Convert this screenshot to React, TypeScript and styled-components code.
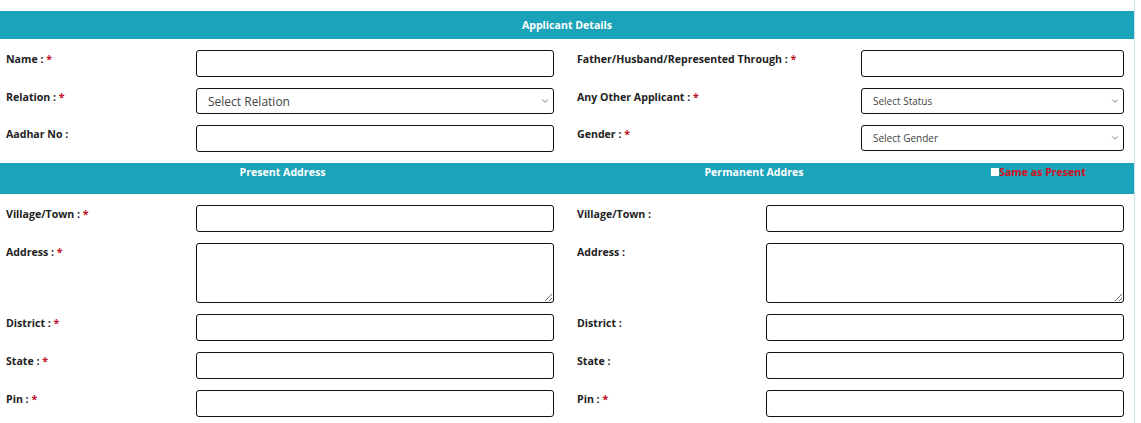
import styled, { createGlobalStyle } from 'styled-components';
import { ChevronDown } from 'lucide-react';

const GlobalStyle = createGlobalStyle`
    html, body {
        margin: 0;
        padding: 0;
        background: #fff;
    }
    body {
        font-family: 'Open Sans', 'Noto Sans', sans-serif;
        color: #222;
    }
`;

interface FieldProps {
    label: string;
    required?: boolean;
    children: React.ReactNode;
}

const Field: React.FC<FieldProps & { side: 'left' | 'right' }> = ({ label, required, side, children }) => (
    <>
        <StyledLabel $side={side}>
            {label} :{required && <StyledStar> *</StyledStar>}
        </StyledLabel>
        <StyledCell>{children}</StyledCell>
    </>
);

const SelectBox: React.FC<{ placeholder: string; small?: boolean }> = ({ placeholder, small }) => (
    <StyledSelectWrap>
        <StyledSelect $small={small} defaultValue="">
            <option value="">{placeholder}</option>
        </StyledSelect>
        <StyledChevron>
            <ChevronDown size={10} strokeWidth={2} />
        </StyledChevron>
    </StyledSelectWrap>
);

const App: React.FC = () => {
    return (
        <StyledPage>
            <GlobalStyle />
            <StyledBar>Applicant Details</StyledBar>
            <StyledRows $rightLabel={284} $rightField={263}>
                <Field side="left" label="Name" required>
                    <StyledInput />
                </Field>
                <StyledSpacer />
                <Field side="right" label="Father/Husband/Represented Through" required>
                    <StyledInput />
                </Field>

                <Field side="left" label="Relation" required>
                    <SelectBox placeholder="Select Relation" />
                </Field>
                <StyledSpacer />
                <Field side="right" label="Any Other Applicant" required>
                    <SelectBox placeholder="Select Status" small />
                </Field>

                <Field side="left" label="Aadhar No">
                    <StyledInput />
                </Field>
                <StyledSpacer />
                <Field side="right" label="Gender" required>
                    <SelectBox placeholder="Select Gender" small />
                </Field>
            </StyledRows>

            <StyledSplitBar>
                <StyledBarCell>Present Address</StyledBarCell>
                <StyledBarCell>Permanent Addres</StyledBarCell>
                <StyledBarCell>
                    <StyledSameAs>
                        <StyledCheck type="checkbox" />
                        Same as Present
                    </StyledSameAs>
                </StyledBarCell>
            </StyledSplitBar>

            <StyledRows $rightLabel={189} $rightField={358}>
                <Field side="left" label="Village/Town" required>
                    <StyledInput />
                </Field>
                <StyledSpacer />
                <Field side="right" label="Village/Town">
                    <StyledInput />
                </Field>

                <Field side="left" label="Address" required>
                    <StyledTextArea />
                </Field>
                <StyledSpacer />
                <Field side="right" label="Address">
                    <StyledTextArea />
                </Field>

                <Field side="left" label="District" required>
                    <StyledInput />
                </Field>
                <StyledSpacer />
                <Field side="right" label="District">
                    <StyledInput />
                </Field>

                <Field side="left" label="State" required>
                    <StyledInput />
                </Field>
                <StyledSpacer />
                <Field side="right" label="State">
                    <StyledInput />
                </Field>

                <Field side="left" label="Pin" required>
                    <StyledInput />
                </Field>
                <StyledSpacer />
                <Field side="right" label="Pin" required>
                    <StyledInput />
                </Field>
            </StyledRows>
        </StyledPage>
    );
};

export default App;

const StyledPage = styled.div`
    width: 1135px;
    min-height: 423px;
    padding-top: 11px;
    box-sizing: border-box;
    border-right: 1px solid #c9e2e6;
`;

const StyledBar = styled.div`
    height: 28px;
    background-color: #1ba3b9;
    color: #fff;
    font-size: 10.6px;
    font-weight: 700;
    display: flex;
    align-items: center;
    justify-content: center;
`;

const StyledSplitBar = styled.div`
    height: 31px;
    background-color: #1ba3b9;
    display: grid;
    grid-template-columns: 565px 378px 1fr;
    align-items: start;
`;

const StyledBarCell = styled.div`
    color: #fff;
    font-size: 10.6px;
    font-weight: 700;
    line-height: 16px;
    padding-top: 1px;
    display: flex;
    justify-content: center;
`;

const StyledSameAs = styled.label`
    display: flex;
    align-items: center;
    gap: 0;
    color: #d0101f;
    font-size: 10.6px;
    font-weight: 700;
    line-height: 16px;
`;

const StyledCheck = styled.input`
    appearance: none;
    width: 8px;
    height: 8px;
    margin: 0;
    background: #fff;
    border: none;
`;

const StyledRows = styled.div<{ $rightLabel: number; $rightField: number }>`
    display: grid;
    grid-template-columns: 196px 358px 23px ${(p) => p.$rightLabel}px ${(p) => p.$rightField}px;
    row-gap: 11px;
    padding: 11px 0;
`;

const StyledSpacer = styled.div``;

const StyledLabel = styled.div<{ $side: 'left' | 'right' }>`
    padding-left: ${(p) => (p.$side === 'left' ? '6px' : '0')};
    padding-top: 2px;
    font-size: 10.6px;
    font-weight: 700;
    line-height: 14px;
    color: #222;
    white-space: nowrap;
`;

const StyledStar = styled.span`
    color: #c0112a;
`;

const StyledCell = styled.div`
    display: flex;
`;

const StyledInput = styled.input`
    width: 100%;
    height: 27px;
    box-sizing: border-box;
    border: 1px solid #111;
    border-radius: 3px;
    padding: 0 10px;
    font-family: inherit;
    font-size: 12px;
    outline: none;
`;

const StyledTextArea = styled.textarea`
    width: 100%;
    height: 60px;
    box-sizing: border-box;
    border: 1px solid #111;
    border-radius: 3px;
    padding: 4px 10px;
    font-family: inherit;
    font-size: 12px;
    outline: none;
    resize: both;
    display: block;
`;

const StyledSelectWrap = styled.div`
    position: relative;
    width: 100%;
    display: flex;
`;

const StyledSelect = styled.select<{ $small?: boolean }>`
    appearance: none;
    width: 100%;
    height: 26px;
    box-sizing: border-box;
    border: 1px solid #111;
    border-radius: 3px;
    background: #fff;
    padding: 0 11px;
    font-family: inherit;
    font-size: ${(p) => (p.$small ? '10px' : '12px')};
    color: #444;
    outline: none;
`;

const StyledChevron = styled.span`
    position: absolute;
    right: 4px;
    top: 8px;
    color: #666;
    display: flex;
    pointer-events: none;
`;
